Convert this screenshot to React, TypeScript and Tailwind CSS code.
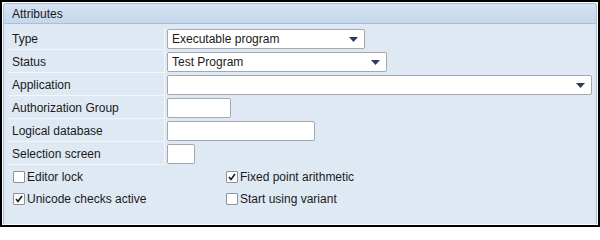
import React from 'react'

const font = { fontFamily: '"Liberation Sans", Arial, sans-serif' }

function Label({ children }: { children: React.ReactNode }) {
  return (
    <div className="w-[157px] h-[22px] flex items-center pl-[4px] border-b border-r border-[#f3f7fb] text-[12px] text-[#1a1a1a]">
      {children}
    </div>
  )
}

function Field({ w, value, dropdown }: { w: number; value?: string; dropdown?: boolean }) {
  return (
    <div
      className="h-[20px] ml-[2px] bg-white border border-[#a3a8ae] rounded-[2px] flex items-center pl-[4px] pr-[6px] text-[12px] text-[#1a1a1a]"
      style={{ width: w }}
    >
      <span className="flex-1 truncate">{value}</span>
      {dropdown && (
        <svg width="9" height="5" viewBox="0 0 9 5">
          <path d="M0 0h9L4.5 5z" fill="#2b3d5c" />
        </svg>
      )}
    </div>
  )
}

function Check({ checked, label }: { checked?: boolean; label: string }) {
  return (
    <div className="flex items-center h-[22px] text-[12px] text-[#1a1a1a]">
      <div className="w-[12px] h-[12px] bg-white border border-[#8e9297] rounded-[1px] flex items-center justify-center mr-[2px]">
        {checked && (
          <svg width="8" height="8" viewBox="0 0 8 8">
            <path d="M1 4l2 2.5L7 1" stroke="#1b1b1b" strokeWidth="1.6" fill="none" />
          </svg>
        )}
      </div>
      {label}
    </div>
  )
}

export default function App() {
  return (
    <div style={font} className="w-[600px] h-[227px] bg-white border-[2px] border-black p-[1px]">
      <div className="h-full border border-b-0 border-[#a9bed8] rounded-t-[3px] bg-[#dfe9f4] flex flex-col">
        <div className="h-[20px] flex items-center pl-[8px] text-[12px] text-[#1a1a1a] bg-gradient-to-b from-[#d6e3f2] to-[#c5d7ec] border-b border-[#a9bed8] rounded-t-[3px]">
          Attributes
        </div>
        <div className="pl-[4px] pt-[4px] flex flex-col gap-[1px]">
          <div className="flex items-center h-[22px]">
            <Label>Type</Label>
            <Field w={198} value="Executable program" dropdown />
          </div>
          <div className="flex items-center h-[22px]">
            <Label>Status</Label>
            <Field w={220} value="Test Program" dropdown />
          </div>
          <div className="flex items-center h-[22px]">
            <Label>Application</Label>
            <Field w={425} dropdown />
          </div>
          <div className="flex items-center h-[22px]">
            <Label>Authorization Group</Label>
            <Field w={64} />
          </div>
          <div className="flex items-center h-[22px]">
            <Label>Logical database</Label>
            <Field w={148} />
          </div>
          <div className="flex items-center h-[22px]">
            <Label>Selection screen</Label>
            <Field w={28} />
          </div>
          <div className="grid grid-cols-[213px_1fr] pl-[5px]">
            <Check label="Editor lock" />
            <Check checked label="Fixed point arithmetic" />
            <Check checked label="Unicode checks active" />
            <Check label="Start using variant" />
          </div>
        </div>
      </div>
    </div>
  )
}
